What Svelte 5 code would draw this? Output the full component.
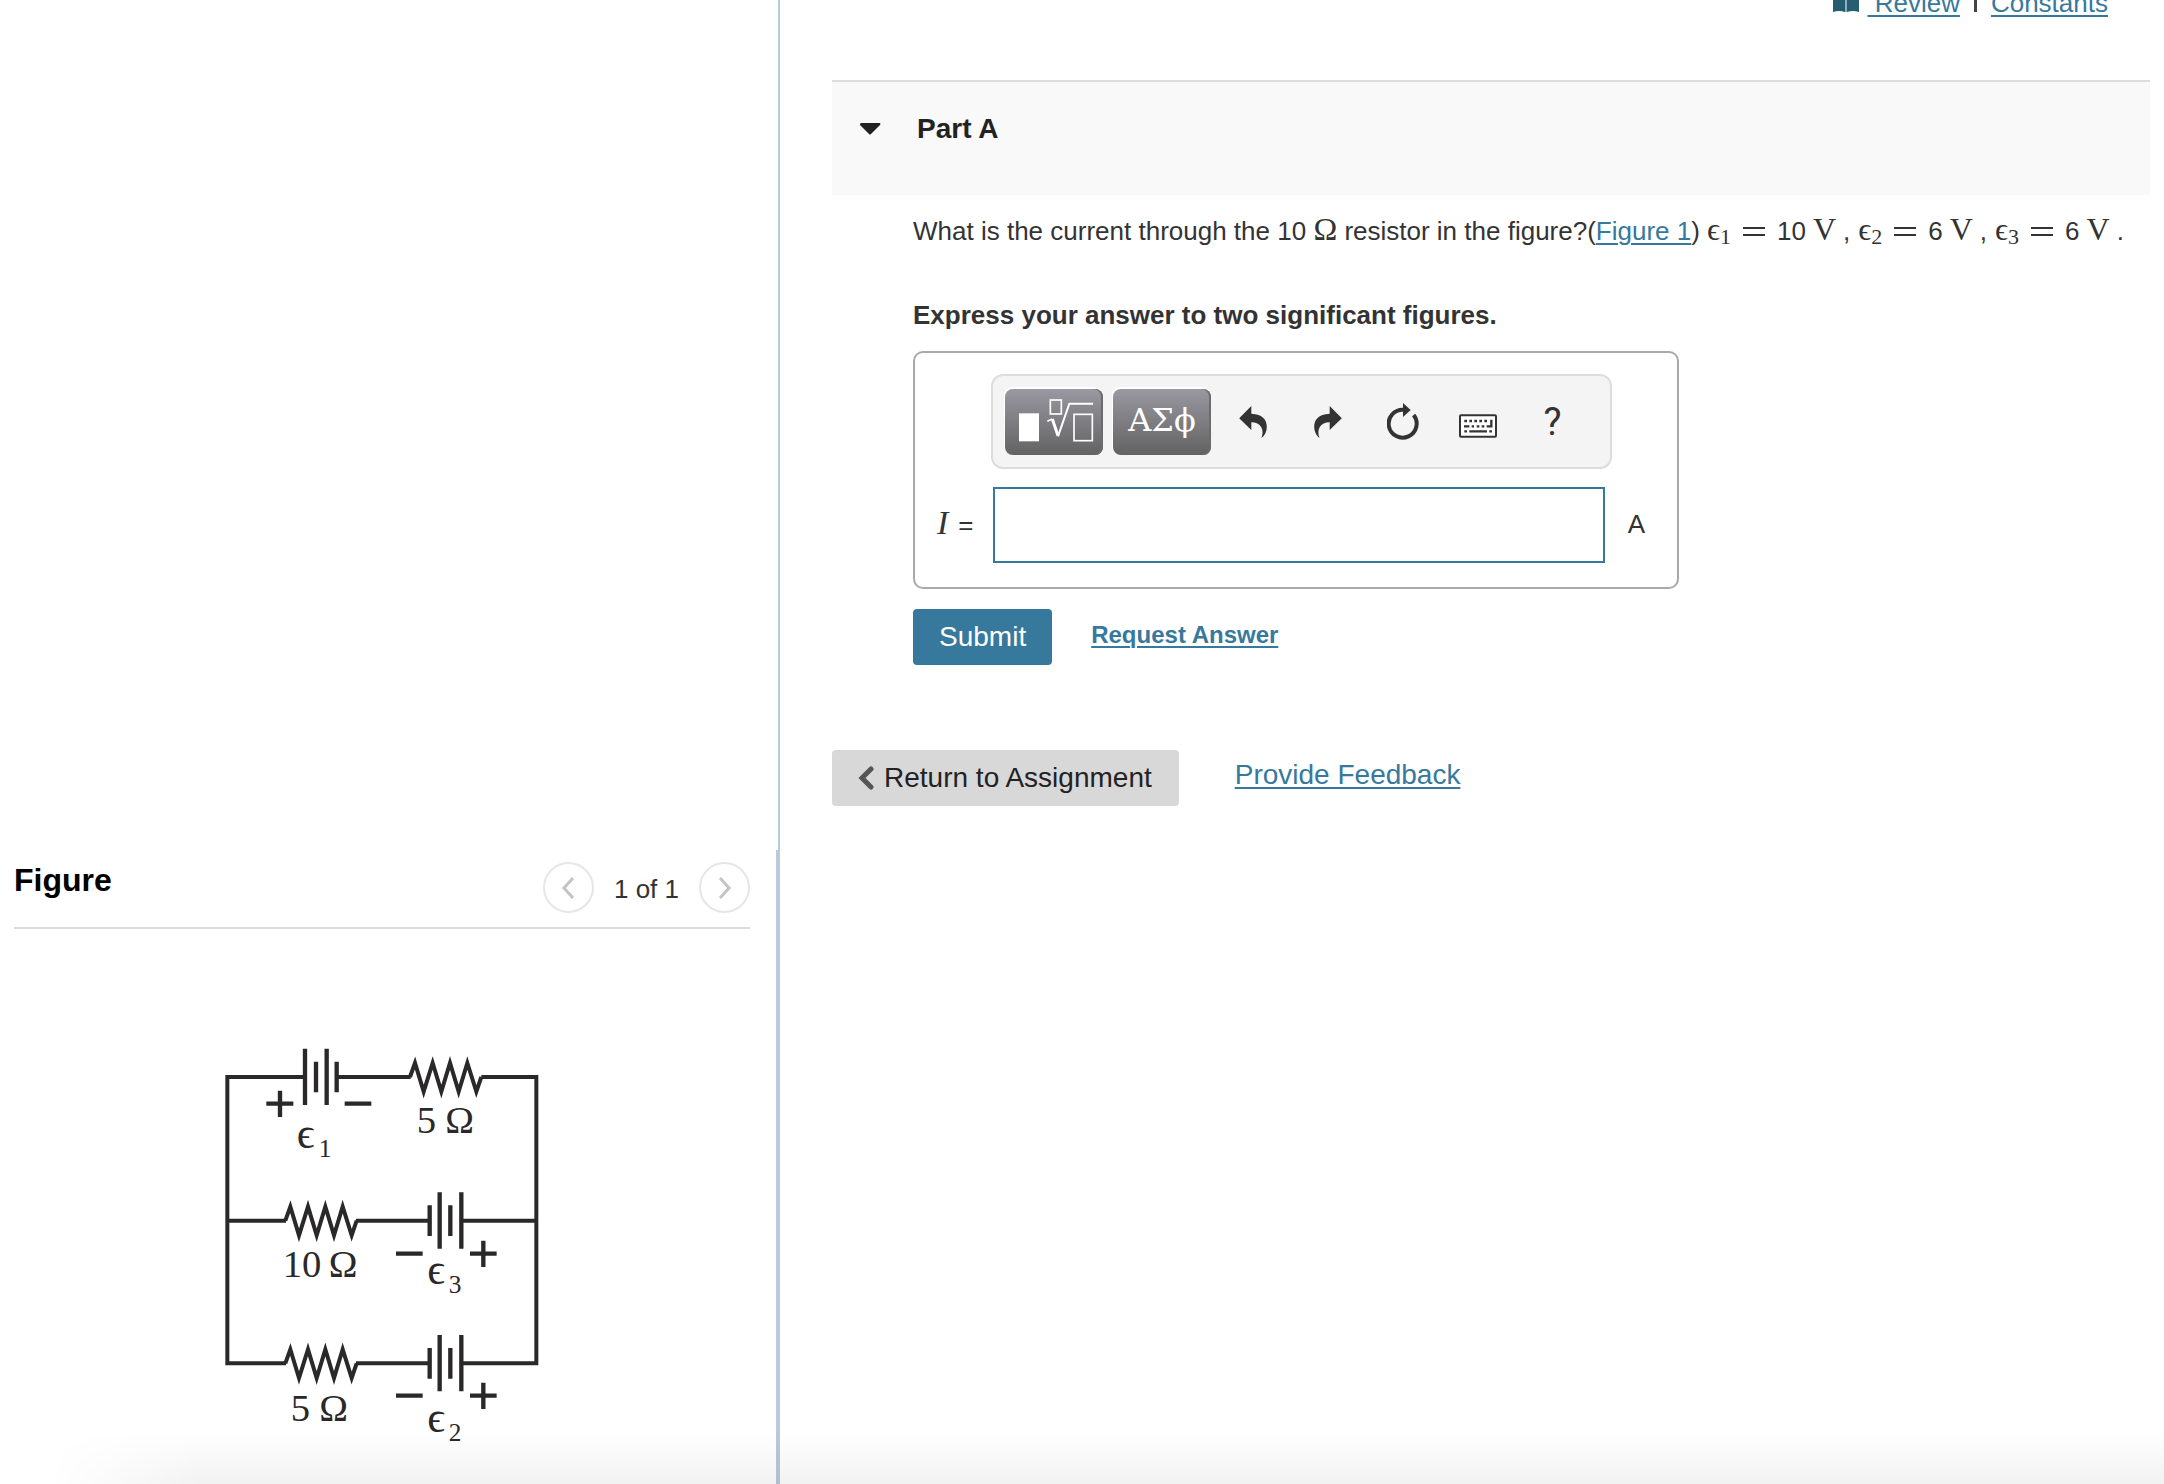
<script lang="ts">
  interface Emf {
    index: number;
    volts: number;
    end: string;
  }

  interface Part {
    type: 'resistor' | 'battery';
    x: number;
    y: number;
    flip?: boolean;
  }

  const emfs: Emf[] = [
    { index: 1, volts: 10, end: ',' },
    { index: 2, volts: 6, end: ',' },
    { index: 3, volts: 6, end: '.' }
  ];

  const parts: Part[] = [
    { type: 'battery', x: 333, y: 141, flip: true },
    { type: 'resistor', x: 600, y: 141 },
    { type: 'resistor', x: 226, y: 572 },
    { type: 'battery', x: 706, y: 572 },
    { type: 'resistor', x: 226, y: 1000 },
    { type: 'battery', x: 706, y: 1000 }
  ];

  let open = true;
  let answer = '';
</script>

<div class="page">
  <aside class="side">
    <section class="figure">
      <div class="figure-head">
        <h2>Figure</h2>
        <div class="pager">
          <button type="button" class="pager-btn" aria-label="Previous figure">
            <svg width="14" height="22" viewBox="0 0 14 22"><path d="M12 1 L3 11 L12 21" /></svg>
          </button>
          <span>1 of 1</span>
          <button type="button" class="pager-btn" aria-label="Next figure">
            <svg width="14" height="22" viewBox="0 0 14 22"><path d="M2 1 L11 11 L2 21" /></svg>
          </button>
        </div>
      </div>

      <svg class="circuit" viewBox="0 0 1050 1362" role="img" aria-label="Circuit with three branches">
        <g class="wire">
          <path d="M290 141 H52 V1000 H228" />
          <path d="M380 141 H602" />
          <path d="M814 141 H979 V1000 H754" />
          <path d="M52 572 H228 M438 572 H658 M754 572 H979" />
          <path d="M438 1000 H658" />
        </g>
        {#each parts as part}
          {#if part.type === 'resistor'}
            <path
              class="zigzag"
              transform="translate({part.x} {part.y})"
              d="M0 0 L15 -42 L41 44 L68 -42 L94 44 L120 -42 L146 44 L172 -42 L199 44 L214 0"
            />
          {:else}
            <path
              class="plates"
              transform="translate({part.x} {part.y}) scale({part.flip ? -1 : 1} 1)"
              d="M-47 -46 V46 M-17 -85 V84 M15 -46 V46 M48 -85 V84"
            />
          {/if}
        {/each}
        <g class="signs">
          <path d="M169 221 H250 M210 182 V261 M404 221 H484" />
          <path d="M558 671 H638 M780 671 H860 M820 632 V711" />
          <path d="M558 1097 H638 M780 1097 H860 M820 1058 V1137" />
        </g>
        <g class="labels">
          <text x="620" y="309">5</text><text x="706" y="309">Ω</text>
          <text x="218" y="741">10</text><text x="356" y="741">Ω</text>
          <text x="242" y="1173">5</text><text x="328" y="1173">Ω</text>
          <text class="emf-label" x="260" y="354">ϵ</text><text class="sub" x="326" y="380">1</text>
          <text class="emf-label" x="652" y="762">ϵ</text><text class="sub" x="716" y="788">3</text>
          <text class="emf-label" x="652" y="1206">ϵ</text><text class="sub" x="716" y="1232">2</text>
        </g>
      </svg>
    </section>
  </aside>

  <main>
    <nav class="top-links">
      <svg width="26" height="24" viewBox="0 0 26 24" aria-hidden="true">
        <path d="M0 2 Q7 -1 12 3 V24 Q6 22 0 24 Z M14 3 Q19 -1 26 2 V24 Q20 22 14 24 Z" fill="#265d73" />
        <path d="M13 3 V24" stroke="#8fb0bd" stroke-width="2" />
      </svg>
      <a class="review" href="#review">&nbsp;Review</a>
      <span class="bar"></span>
      <a href="#constants">Constants</a>
    </nav>

    <button type="button" class="part-head" aria-expanded={open} on:click={() => (open = !open)}>
      <svg width="21" height="12" viewBox="0 0 21 12" aria-hidden="true">
        <path d="M1 0 H20 Q21 1 20 2 L11 11 Q10 12 9 11 L0 2 Q0 0 1 0 Z" fill="#222" />
      </svg>
      <span>Part A</span>
    </button>

    {#if open}
      <div class="part-body">
        <p class="question">
          What is the current through the 10 <span class="math">Ω</span> resistor in the figure?(<a
            href="#figure">Figure 1</a
          >)
          {#each emfs as emf}
            <span class="emf"
              ><span class="math">ϵ<sub>{emf.index}</sub></span><svg
                class="equals"
                width="22"
                height="9"
                viewBox="0 0 22 9"
                role="img"
                aria-label="equals"><path d="M0 1 H22 M0 8 H22" /></svg
              >{emf.volts}<span class="math volt">V</span>{emf.end}</span
            >
          {/each}
        </p>
        <p class="hint">Express your answer to two significant figures.</p>

        <div class="answer-box">
          <div class="toolbar">
            <button type="button" class="dark" aria-label="Templates">
              <svg width="98" height="66" viewBox="0 0 294 198">
                <rect x="42" y="73" width="60" height="84" fill="#fff" />
                <g fill="none" stroke="#fff" stroke-width="5">
                  <rect x="136" y="33" width="33" height="42" />
                  <rect x="207" y="76" width="55" height="79" />
                  <path d="M127 97 L142 90" />
                  <path d="M142 90 L159 140" stroke-width="9" />
                  <path d="M159 142 L193 44 H264" stroke-width="6" />
                </g>
              </svg>
            </button>
            <button type="button" class="dark symbols" aria-label="Symbols">ΑΣϕ</button>
            <div class="tools">
              <button type="button" aria-label="Undo">
                <svg width="28" height="32" viewBox="0 0 82 95">
                  <path d="M0 36 L36 0 V23 C70 24 82 42 82 62 C82 76 76 87 66 95 C76 70 64 48 36 48 V71 Z" />
                </svg>
              </button>
              <button type="button" aria-label="Redo">
                <svg width="28" height="32" viewBox="0 0 82 95">
                  <path d="M82 36 L46 0 V23 C12 24 0 42 0 62 C0 76 6 87 16 95 C6 70 18 48 46 48 V71 Z" />
                </svg>
              </button>
              <button type="button" aria-label="Reset">
                <svg width="32" height="38" viewBox="0 0 96 114">
                  <path d="M48 0 L71 21 L48 42 Z" />
                  <path d="M80 36 A42 42 0 1 1 49 20" fill="none" stroke="#333" stroke-width="12" />
                </svg>
              </button>
              <button type="button" aria-label="Keyboard">
                <svg class="keyboard" width="38" height="24" viewBox="0 0 114 70">
                  <rect x="3" y="3" width="108" height="64" rx="3" fill="#fff" stroke="#333" stroke-width="6" />
                  <g fill="none" stroke="#333" stroke-width="7">
                    <path d="M16 20 H88" stroke-dasharray="8 7" />
                    <path d="M15 36 H31 M38 36 H45 M53 36 H61 M68 36 H76 M83 36 H97 V16" />
                    <path d="M16 51 H24 M31 51 H84 M91 51 H99" />
                  </g>
                </svg>
              </button>
              <button type="button" class="help" aria-label="Help">?</button>
            </div>
          </div>
          <div class="answer-row">
            <label for="answer"><i>I</i> <span>=</span></label>
            <input id="answer" type="text" autocomplete="off" bind:value={answer} />
            <span class="unit">A</span>
          </div>
        </div>

        <div class="actions">
          <button type="button" class="submit">Submit</button>
          <a href="#request">Request Answer</a>
        </div>
      </div>
    {/if}

    <footer>
      <button type="button" class="return">
        <svg width="16" height="24" viewBox="0 0 16 24" aria-hidden="true">
          <path d="M13 3 L4 12 L13 21" fill="none" stroke="#555" stroke-width="5" stroke-linecap="round" />
        </svg>
        Return to Assignment
      </button>
      <a href="#feedback">Provide Feedback</a>
    </footer>
  </main>
  <div class="bottom-shade"></div>
</div>

<style>
  :global(body) {
    background: #fff;
  }

  .page {
    position: relative;
    display: flex;
    min-height: 100vh;
    overflow: hidden;
    color: #333;
    font-family: 'Liberation Sans', Arial, sans-serif;
    font-size: 26px;
    line-height: 36px;
  }

  button {
    border: 0;
    padding: 0;
    background: none;
    color: inherit;
    font: inherit;
    cursor: pointer;
  }

  a {
    color: #37799c;
    text-decoration-thickness: 2px;
    text-underline-offset: 3px;
  }

  h2,
  p {
    margin: 0;
  }

  .side {
    width: calc(36% + 1px);
    flex: none;
    box-sizing: border-box;
    display: flex;
    flex-direction: column;
    justify-content: flex-end;
    border-right: 2px solid #b9c9de;
  }

  .figure {
    border-right: 2px solid #b9c9de;
    padding: 12px 26px 0 14px;
  }

  .figure-head {
    display: flex;
    justify-content: space-between;
    padding-bottom: 14px;
    border-bottom: 2px solid #ddd;
  }

  .figure-head h2 {
    color: #000;
    font-size: 32px;
    line-height: 36px;
  }

  .pager {
    display: flex;
    align-items: center;
    gap: 20px;
  }

  .pager span {
    padding-top: 3px;
  }

  .pager-btn {
    display: grid;
    place-items: center;
    width: 51px;
    height: 51px;
    box-sizing: border-box;
    border: 2px solid #e6e6e6;
    border-radius: 50%;
    background: #fff;
  }

  .pager-btn path {
    fill: none;
    stroke: #c4c4c4;
    stroke-width: 3;
  }

  .circuit {
    display: block;
    width: 350px;
    margin: 101px 0 0 196px;
  }

  .wire,
  .plates,
  .zigzag,
  .signs {
    fill: none;
    stroke: #2a2829;
    stroke-width: 12;
  }

  .plates,
  .signs {
    stroke-width: 13;
  }

  .labels {
    fill: #2a2829;
    font-family: 'Liberation Serif', serif;
    font-size: 116px;
  }

  .labels .emf-label {
    font-size: 132px;
  }

  .labels .sub {
    font-size: 76px;
  }

  main {
    flex: 1;
    min-width: 0;
    padding: 0 14px 0 52px;
  }

  .top-links {
    display: flex;
    align-items: flex-start;
    justify-content: flex-end;
    margin-top: -12px;
    padding-right: 42px;
    line-height: 30px;
  }

  .review {
    margin-left: 8px;
  }

  .bar {
    width: 3px;
    height: 24px;
    margin: 0 14px;
    background: #444;
  }

  .part-head {
    display: flex;
    align-items: center;
    gap: 36px;
    width: 100%;
    margin-top: 62px;
    padding: 31px 28px 50px;
    border-top: 2px solid #ddd;
    background: #f9f9f9;
    color: #222;
    font-size: 28px;
    font-weight: 700;
    line-height: 32px;
  }

  .part-body {
    padding: 18px 0 0 81px;
  }

  .math {
    font-family: 'Liberation Serif', serif;
    font-size: 32px;
    line-height: 1;
  }

  .math sub {
    font-size: 22px;
    line-height: 1;
    vertical-align: -4px;
  }

  .emf {
    white-space: nowrap;
  }

  .emf + .emf {
    margin-left: 8px;
  }

  .equals {
    margin: 0 12px 4px;
    fill: none;
    stroke: #333;
    stroke-width: 2;
  }

  .volt {
    margin: 0 7px;
  }

  .hint {
    margin-top: 48px;
    font-weight: 700;
  }

  .answer-box {
    max-width: 766px;
    box-sizing: border-box;
    margin-top: 18px;
    padding: 21px 32px 24px 22px;
    border: 2px solid #a9a9a9;
    border-radius: 10px;
  }

  .toolbar {
    display: flex;
    align-items: center;
    gap: 10px;
    margin: 0 33px 0 54px;
    padding: 13px 12px 12px;
    border: 2px solid #ddd;
    border-radius: 12px;
    background: #f4f4f4;
  }

  .dark {
    width: 98px;
    height: 66px;
    flex: none;
    border-radius: 8px;
    background: linear-gradient(#9a98a1, #626262);
    box-shadow:
      -1px -2px 0 #fff,
      inset -2px 0 0 #6b6b6b;
    color: #fff;
  }

  .dark svg {
    display: block;
  }

  .symbols {
    padding-bottom: 5px;
    font-family: 'DejaVu Serif', serif;
    font-size: 32px;
  }

  .tools {
    display: flex;
    flex: 1;
    margin-left: -6px;
  }

  .tools button {
    display: grid;
    place-items: center;
    width: 75px;
    height: 66px;
  }

  .tools svg {
    fill: #333;
  }

  .tools .keyboard {
    margin-top: 8px;
  }

  .tools .help {
    font-family: Roboto, sans-serif;
    font-size: 38px;
  }

  .answer-row {
    display: flex;
    align-items: center;
    margin-top: 18px;
  }

  .answer-row label {
    display: flex;
    align-items: baseline;
    gap: 10px;
    width: 56px;
    flex: none;
    padding-bottom: 3px;
  }

  .answer-row i {
    font-family: 'Liberation Serif', serif;
    font-size: 34px;
  }

  .answer-row input {
    flex: 1;
    min-width: 0;
    height: 76px;
    box-sizing: border-box;
    padding: 0 12px;
    border: 2px solid #37799c;
    border-radius: 0;
    background: #fff;
    font: inherit;
    outline: 0;
  }

  .unit {
    margin-left: 23px;
    padding-bottom: 2px;
  }

  .actions {
    display: flex;
    align-items: center;
    gap: 39px;
    margin-top: 20px;
  }

  .actions a {
    padding-bottom: 4px;
    font-size: 24px;
    font-weight: 700;
  }

  .submit {
    height: 56px;
    padding: 0 26px;
    border-radius: 4px;
    background: #37799c;
    color: #fff;
    font-size: 28px;
  }

  footer {
    display: flex;
    align-items: center;
    gap: 56px;
    margin-top: 85px;
    font-size: 28px;
  }

  footer a {
    padding-bottom: 6px;
  }

  .return {
    display: flex;
    align-items: center;
    gap: 10px;
    height: 56px;
    padding: 0 27px 0 26px;
    border-radius: 4px;
    background: #d8d8d8;
    color: #222;
  }

  .bottom-shade {
    position: absolute;
    inset: auto 0 0 0;
    height: 52px;
    background: linear-gradient(transparent, rgba(0, 0, 0, 0.05));
    mask-image: linear-gradient(90deg, transparent 50px, #000 200px);
    pointer-events: none;
  }
</style>
